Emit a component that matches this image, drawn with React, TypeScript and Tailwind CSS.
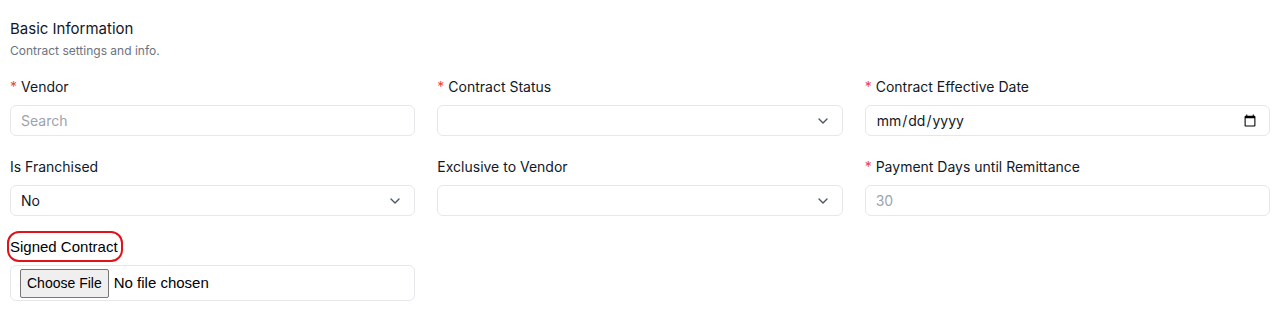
import * as React from "react";

function Label({
  children,
  required,
}: {
  children: React.ReactNode;
  required?: boolean;
}) {
  return (
    <label className="flex h-5 items-center text-sm leading-5 text-[#111827]">
      {required && <span className="mr-1 text-[#ef4444]">*</span>}
      {children}
    </label>
  );
}

function Chevron() {
  return (
    <svg
      className="pointer-events-none absolute right-[12px] top-1/2 h-4 w-4 -translate-y-1/2 text-[#4b5563]"
      viewBox="0 0 24 24"
      fill="none"
      stroke="currentColor"
      strokeWidth="2"
      strokeLinecap="round"
      strokeLinejoin="round"
    >
      <path d="m6 9 6 6 6-6" />
    </svg>
  );
}

function SelectField({ value, options }: { value?: string; options: string[] }) {
  return (
    <div className="relative">
      <select
        defaultValue={value ?? ""}
        className="h-[31px] w-full appearance-none rounded-md border border-[#e5e7eb] bg-white px-[10px] text-sm text-[#111827] outline-none"
      >
        <option value=""></option>
        {options.map((o) => (
          <option key={o} value={o}>
            {o}
          </option>
        ))}
      </select>
      <Chevron />
    </div>
  );
}

const inputCls =
  "h-[31px] w-full rounded-md border border-[#e5e7eb] bg-white px-[10px] text-sm text-[#111827] outline-none placeholder:text-[#9ca3af]";

export default function App() {
  return (
    <div
      className="min-h-[314px] bg-white px-[10px] pt-[19px]"
      style={{ fontFamily: "Inter, 'Noto Sans', sans-serif" }}
    >
      <h2 className="text-[15px] leading-5 text-[#111827]">Basic Information</h2>
      <p className="mt-1 text-xs leading-4 text-[#6b7280]">Contract settings and info.</p>

      <div className="mt-[18px] grid grid-cols-3 gap-x-[22px] gap-y-[21px]">
        <div className="flex flex-col gap-2">
          <Label required>Vendor</Label>
          <input className={inputCls} placeholder="Search" />
        </div>
        <div className="flex flex-col gap-2">
          <Label required>Contract Status</Label>
          <SelectField options={["Active", "Inactive"]} />
        </div>
        <div className="flex flex-col gap-2">
          <Label required>Contract Effective Date</Label>
          <input type="date" className={inputCls} />
        </div>

        <div className="flex flex-col gap-2">
          <Label>Is Franchised</Label>
          <SelectField value="No" options={["No", "Yes"]} />
        </div>
        <div className="flex flex-col gap-2">
          <Label>Exclusive to Vendor</Label>
          <SelectField options={["No", "Yes"]} />
        </div>
        <div className="flex flex-col gap-2">
          <Label required>Payment Days until Remittance</Label>
          <input className={inputCls} placeholder="30" />
        </div>

        <div className="flex flex-col gap-[8px]">
          <div className="relative w-fit">
            <label
              className="flex h-5 items-center text-[15px] leading-5 text-black"
              style={{ fontFamily: "'Liberation Sans', Arial, sans-serif" }}
            >
              Signed Contract
            </label>
            <span className="pointer-events-none absolute -left-[3px] -right-[5px] -top-[6px] -bottom-[5px] rounded-[12px] border-2 border-[#e0121b]" />
          </div>
          <div className="flex h-[36px] items-center rounded-md border border-[#e5e7eb] bg-white px-[9px]">
            <input
              type="file"
              className="text-[15px] text-black file:mr-[5px] file:rounded-[2px] file:border file:border-solid file:border-[#767676] file:bg-[#efefef] file:px-[6px] file:py-[3px] file:text-[14px] file:text-black"
              style={{ fontFamily: "'Liberation Sans', Arial, sans-serif" }}
            />
          </div>
        </div>
      </div>
    </div>
  );
}
